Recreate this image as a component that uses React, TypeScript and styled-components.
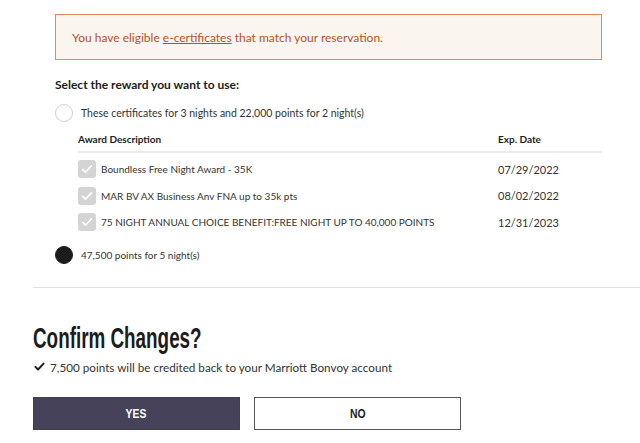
import React from 'react';
import styled, { createGlobalStyle } from 'styled-components';

const GlobalStyle = createGlobalStyle`
  html, body { margin: 0; padding: 0; background: #fff; }
  body { font-family: 'Lato', 'Open Sans', sans-serif; color: #1c1c1c; }
`;

const Page = styled.div`
  width: 640px;
  height: 443px;
  overflow: hidden;
  padding: 14px 0 0 33px;
  box-sizing: border-box;
`;

const RewardSection = styled.section`
  padding: 0 38px 0 22px;
`;

const Banner = styled.div`
  border: 1.5px solid #de8a5a;
  background: #faf6ef;
  height: 46px;
  box-sizing: border-box;
  display: flex;
  align-items: center;
  padding: 0 16px;
  font-size: 12px;
  color: #b4521f;
`;

const BannerLink = styled.a`
  color: inherit;
  text-decoration: underline;
`;

const SectionTitle = styled.h3`
  margin: 17px 0 0;
  font-size: 12px;
  font-weight: 700;
  color: #1c1c1c;
`;

const OptionRow = styled.label<{ $top: number; $size: number }>`
  display: flex;
  align-items: center;
  gap: 8px;
  margin-top: ${(p) => p.$top}px;
  font-size: ${(p) => p.$size}px;
  color: #333;
`;

const Radio = styled.span<{ $checked?: boolean }>`
  width: 16px;
  height: 16px;
  border-radius: 50%;
  border: 1px solid ${(p) => (p.$checked ? '#1c1c1c' : '#cfcfcf')};
  background: ${(p) => (p.$checked ? '#1c1c1c' : '#fff')};
  flex-shrink: 0;
`;

const Table = styled.div`
  margin: 11px 0 0 23px;
`;

const HeaderRow = styled.div`
  display: grid;
  grid-template-columns: 1fr 104px;
  font-size: 10px;
  font-weight: 700;
  color: #1c1c1c;
  padding-bottom: 6px;
  border-bottom: 2px solid #ebebeb;
`;

const Rows = styled.div`
  padding-top: 3px;
`;

const AwardRow = styled.div`
  display: grid;
  grid-template-columns: 1fr 104px;
  align-items: center;
  height: 26.5px;
`;

const AwardName = styled.div`
  display: flex;
  align-items: center;
  gap: 5px;
  font-size: 10px;
  color: #333;
`;

const CheckBox = styled.span`
  width: 18px;
  height: 18px;
  border-radius: 3px;
  background: #d4d4d4;
  display: flex;
  align-items: center;
  justify-content: center;
`;

const ExpDate = styled.div`
  font-size: 11px;
  color: #333;
`;

const Divider = styled.hr`
  border: none;
  border-top: 1px solid #e2e2e2;
  margin: 23px 0 0;
`;

const ConfirmTitle = styled.h2`
  margin: 35px 0 0;
  font-family: 'Liberation Sans', 'DejaVu Sans', sans-serif;
  font-weight: 700;
  font-size: 29px;
  line-height: 30px;
  color: #1c1c1c;
  display: inline-block;
  transform: scaleX(0.65);
  transform-origin: left center;
  white-space: nowrap;
`;

const Note = styled.div`
  display: flex;
  align-items: center;
  gap: 4px;
  margin-top: 7px;
  font-size: 11.7px;
  color: #333;
`;

const Buttons = styled.div`
  display: flex;
  gap: 14px;
  margin-top: 23px;
`;

const Button = styled.button<{ $primary?: boolean }>`
  width: 207px;
  height: 33px;
  box-sizing: border-box;
  border: 1.5px solid ${(p) => (p.$primary ? '#403d55' : '#555')};
  background: ${(p) => (p.$primary ? '#46425a' : '#fff')};
  color: ${(p) => (p.$primary ? '#fff' : '#1c1c1c')};
  padding: 0;
  cursor: pointer;
`;

const ButtonLabel = styled.span`
  display: inline-block;
  font-family: 'Liberation Sans', 'DejaVu Sans', sans-serif;
  font-weight: 700;
  font-size: 13px;
  transform: scaleX(0.8);
`;

const awards = [
  { name: 'Boundless Free Night Award - 35K', date: '07/29/2022' },
  { name: 'MAR BV AX Business Anv FNA up to 35k pts', date: '08/02/2022' },
  { name: '75 NIGHT ANNUAL CHOICE BENEFIT:FREE NIGHT UP TO 40,000 POINTS', date: '12/31/2023' },
];

const Check = ({ color, size, weight }: { color: string; size: number; weight: number }) => (
  <svg width={size} height={size} viewBox="0 0 16 16" fill="none">
    <path d="M3 8.5l3.2 3.2L13 4.5" stroke={color} strokeWidth={weight} strokeLinecap="round" strokeLinejoin="round" />
  </svg>
);

export default function App() {
  return (
    <Page>
      <GlobalStyle />
      <RewardSection>
        <Banner>
          <span>
            You have eligible <BannerLink>e-certificates</BannerLink> that match your reservation.
          </span>
        </Banner>
        <SectionTitle>Select the reward you want to use:</SectionTitle>
        <OptionRow $top={12} $size={10.5}>
          <Radio />
          These certificates for 3 nights and 22,000 points for 2 night(s)
        </OptionRow>
        <Table>
          <HeaderRow>
            <span>Award Description</span>
            <span>Exp. Date</span>
          </HeaderRow>
          <Rows>
            {awards.map((a) => (
              <AwardRow key={a.name}>
                <AwardName>
                  <CheckBox>
                    <Check color="#fff" size={14} weight={2} />
                  </CheckBox>
                  {a.name}
                </AwardName>
                <ExpDate>{a.date}</ExpDate>
              </AwardRow>
            ))}
          </Rows>
        </Table>
        <OptionRow $top={10} $size={10}>
          <Radio $checked />
          47,500 points for 5 night(s)
        </OptionRow>
      </RewardSection>
      <Divider />
      <div>
        <ConfirmTitle>Confirm Changes?</ConfirmTitle>
      </div>
      <Note>
        <Check color="#1c1c1c" size={13} weight={2.4} />
        7,500 points will be credited back to your Marriott Bonvoy account
      </Note>
      <Buttons>
        <Button $primary>
          <ButtonLabel>YES</ButtonLabel>
        </Button>
        <Button>
          <ButtonLabel>NO</ButtonLabel>
        </Button>
      </Buttons>
    </Page>
  );
}
